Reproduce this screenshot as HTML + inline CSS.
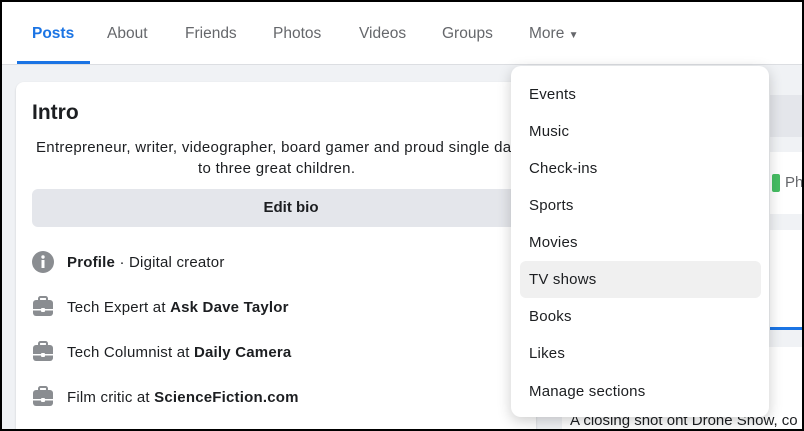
<!DOCTYPE html>
<html><head><style>
*{margin:0;padding:0;box-sizing:border-box}
body{width:804px;height:431px;overflow:hidden;background:#000;font-family:"Liberation Sans",Helvetica,Arial,sans-serif;position:relative}
.frame{position:absolute;left:2px;top:2px;width:800px;height:427px;background:#f0f2f5;overflow:hidden}
.nav{position:absolute;left:0;top:0;width:800px;height:63px;background:#fff;border-bottom:1px solid #dcdee2}
.nav span{position:absolute;top:23px;font-size:15.5px;color:#65676b}
.tabline{position:absolute;left:15px;top:59px;width:73px;height:3px;background:#1b74e4}
.card{position:absolute;left:14px;top:80px;width:520px;height:360px;background:#fff;border-radius:8px;box-shadow:0 1px 2px rgba(0,0,0,.15)}
.r{position:absolute;background:#fff}
.menu{position:absolute;left:509px;top:64px;width:258px;height:351px;background:#fff;border-radius:10px;box-shadow:0 4px 14px rgba(0,0,0,.2)}
.menu div{position:absolute;left:18px;font-size:15px;color:#1c1e21;letter-spacing:.2px}
.row{position:absolute;left:30px;font-size:15px;color:#1c1e21;letter-spacing:.2px}
.ic{position:absolute;left:30px;width:22px;height:22px}
</style></head><body>
<div class="frame">
<div class="nav">
<span style="left:30px;color:#1b74e4;font-weight:bold">Posts</span>
<span style="left:105px">About</span>
<span style="left:183px">Friends</span>
<span style="left:271px">Photos</span>
<span style="left:357px">Videos</span>
<span style="left:440px">Groups</span>
<span style="left:527px">More <span style="position:static;font-size:10px">▼</span></span>
<div class="tabline"></div>
</div>
<div class="r" style="left:768px;top:93px;width:40px;height:42px;background:#e4e6eb"></div>
<div class="r" style="left:768px;top:150px;width:40px;height:62px"></div>
<div style="position:absolute;left:770px;top:172px;width:8px;height:18px;border:2px solid #45bd62;border-radius:2px;background:#45bd62"></div>
<div style="position:absolute;left:783px;top:172px;font-size:15px;color:#65676b">Ph</div>
<div class="r" style="left:768px;top:228px;width:40px;height:100px;border-bottom:3px solid #1b74e4"></div>
<div class="r" style="left:560px;top:345px;width:250px;height:90px"></div>
<div style="position:absolute;left:568px;top:410px;font-size:15px;color:#1c1e21;white-space:nowrap">A closing shot ont Drone Show, co</div>
<div class="card">
<div style="position:absolute;left:16px;top:19px;font-size:21px;font-weight:bold;color:#1c1e21">Intro</div>
<div style="position:absolute;left:20px;top:55px;width:540px;font-size:15px;line-height:21px;color:#1c1e21;letter-spacing:.3px;white-space:nowrap">Entrepreneur, writer, videographer, board gamer and proud single dad<br><span style="padding-left:162px">to three great children.</span></div>
<div style="position:absolute;left:16px;top:107px;width:510px;height:38px;background:#e4e6eb;border-radius:6px;font-size:15px;font-weight:bold;color:#1c1e21;text-align:center;line-height:38px;padding-left:8px">Edit bio</div>
</div>
<svg class="ic" style="top:249px" viewBox="0 0 22 22"><circle cx="11" cy="11" r="11" fill="#8a8d91"/><rect x="9.5" y="9" width="3" height="8" fill="#fff"/><circle cx="11" cy="6" r="1.7" fill="#fff"/></svg>
<div class="row" style="left:65px;top:252px"><b>Profile</b> · Digital creator</div>
<svg class="ic" style="top:294px" viewBox="0 0 22 22"><rect x="7" y="1" width="8" height="4" rx="1.5" fill="none" stroke="#8a8d91" stroke-width="2"/><rect x="1" y="4" width="20" height="16" rx="3" fill="#8a8d91"/><rect x="1" y="13" width="20" height="1.5" fill="#fff"/><rect x="9" y="12" width="4" height="4" rx="1" fill="#fff"/></svg>
<div class="row" style="left:65px;top:297px">Tech Expert at <b>Ask Dave Taylor</b></div>
<svg class="ic" style="top:339px" viewBox="0 0 22 22"><rect x="7" y="1" width="8" height="4" rx="1.5" fill="none" stroke="#8a8d91" stroke-width="2"/><rect x="1" y="4" width="20" height="16" rx="3" fill="#8a8d91"/><rect x="1" y="13" width="20" height="1.5" fill="#fff"/><rect x="9" y="12" width="4" height="4" rx="1" fill="#fff"/></svg>
<div class="row" style="left:65px;top:342px">Tech Columnist at <b>Daily Camera</b></div>
<svg class="ic" style="top:384px" viewBox="0 0 22 22"><rect x="7" y="1" width="8" height="4" rx="1.5" fill="none" stroke="#8a8d91" stroke-width="2"/><rect x="1" y="4" width="20" height="16" rx="3" fill="#8a8d91"/><rect x="1" y="13" width="20" height="1.5" fill="#fff"/><rect x="9" y="12" width="4" height="4" rx="1" fill="#fff"/></svg>
<div class="row" style="left:65px;top:387px">Film critic at <b>ScienceFiction.com</b></div>
<div class="menu">
<div style="top:20px">Events</div>
<div style="top:57px">Music</div>
<div style="top:94px">Check-ins</div>
<div style="top:131px">Sports</div>
<div style="top:168px">Movies</div>
<div style="left:9px;top:195px;width:241px;height:37px;background:#f0f0f0;border-radius:6px"></div>
<div style="top:205px">TV shows</div>
<div style="top:242px">Books</div>
<div style="top:279px">Likes</div>
<div style="top:317px">Manage sections</div>
</div>
</div>
</body></html>
